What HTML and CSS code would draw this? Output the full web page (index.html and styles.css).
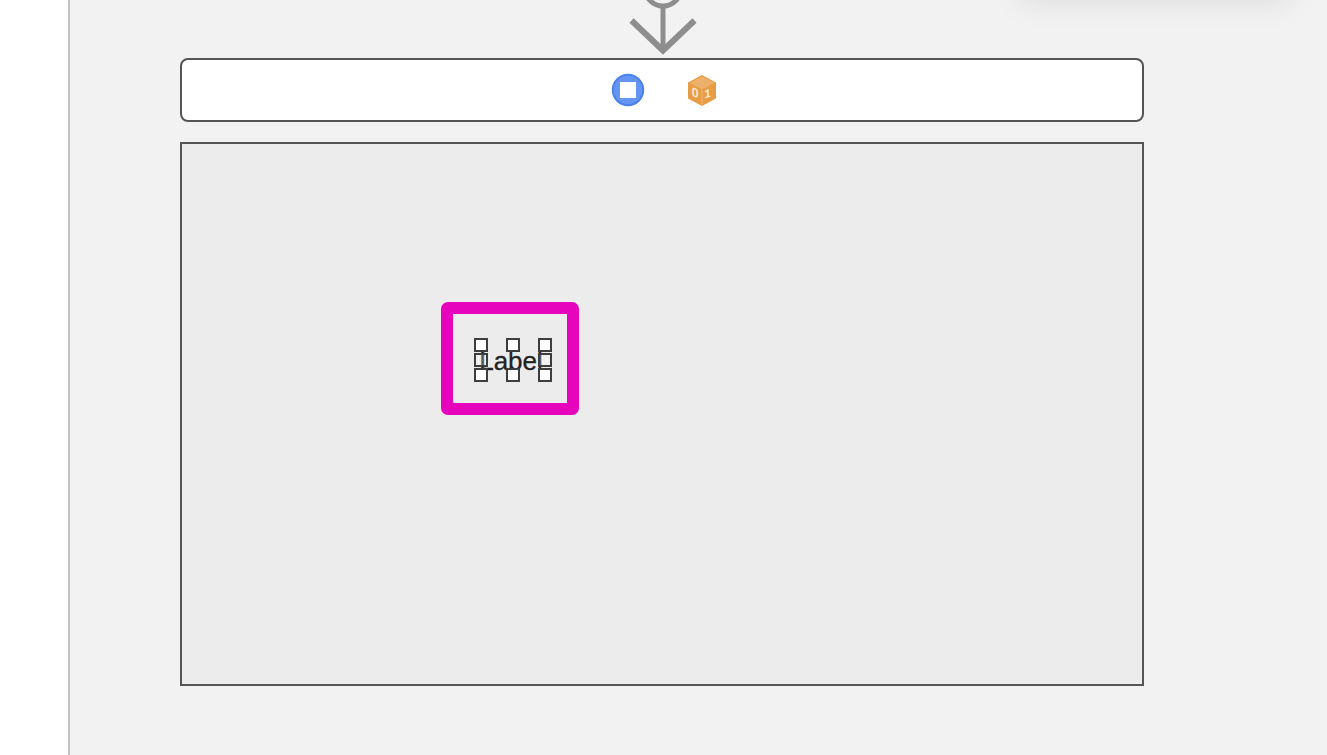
FILE: index.html
```html
<!DOCTYPE html>
<html lang="en">
<head>
<meta charset="utf-8">
<title>Storyboard scene</title>
<link rel="stylesheet" href="styles.css">
</head>
<body>
<div class="app">
  <aside class="sidebar"></aside>
  <main class="canvas">
    <div class="popup-shadow"></div>
    <svg class="segue" width="964" height="58" viewBox="0 0 964 58" aria-hidden="true">
      <circle cx="483" cy="-12" r="18" fill="none" stroke="#8e8e8e" stroke-width="5"/>
      <path d="M483 6V50" fill="none" stroke="#8e8e8e" stroke-width="5"/>
      <path d="M451.500 20.500L483 50.500L514.500 20.500" fill="none" stroke="#8e8e8e" stroke-width="6"/>
    </svg>
    <section class="scene-dock">
      <svg class="dock-icon" width="34" height="34" viewBox="0 0 34 34" aria-hidden="true">
        <circle cx="17" cy="17" r="15.200" fill="#6495f3" stroke="#4a81ec" stroke-width="2"/>
        <rect x="9" y="9" width="16" height="16" fill="#fff"/>
      </svg>
      <svg class="dock-icon" width="32" height="34" viewBox="0 0 32 34" aria-hidden="true">
        <path d="M16 2L30 9.500V25.500L16 33L2 25.500V9.500Z" fill="#e89c45"/>
        <path d="M16 3.500L28.500 10L16 16.500L3.500 10Z" fill="#edb06b"/>
        <path d="M16 17V32" stroke="#f0b87a" stroke-width="1"/>
        <text class="cube-digit cube-digit-left" transform="translate(9 24) skewY(20)">0</text>
        <text class="cube-digit cube-digit-right" transform="translate(21.500 24.500) skewY(-15)">1</text>
      </svg>
    </section>
    <section class="scene-view">
      <div class="label-target">
        <span class="label-text">Label</span>
        <div class="handles">
          <i class="handle"></i><i class="handle"></i><i class="handle"></i>
          <i class="handle handle-mid"></i><i class="handle-gap"></i><i class="handle handle-mid"></i>
          <i class="handle"></i><i class="handle"></i><i class="handle"></i>
        </div>
      </div>
    </section>
  </main>
</div>
</body>
</html>
```

FILE: styles.css
```css
html, body {
  margin: 0;
  height: 100%;
  overflow: hidden;
  background: #fff;
}

.app {
  display: flex;
  width: 1327px;
  height: 755px;
  overflow: hidden;
}

.sidebar {
  width: 68px;
  flex: none;
  background: #fff;
}

.canvas {
  position: relative;
  flex: 1;
  box-sizing: border-box;
  padding-left: 110px;
  background: #f2f2f2;
  border-left: 2px solid #c2c2c2;
  overflow: hidden;
}

.popup-shadow {
  position: absolute;
  left: 950px;
  top: -40px;
  width: 270px;
  height: 40px;
  box-shadow: 0 0 32px rgba(0, 0, 0, 0.1);
}

.segue {
  display: block;
  overflow: hidden;
}

.scene-dock {
  box-sizing: border-box;
  width: 964px;
  height: 64px;
  display: flex;
  align-items: center;
  justify-content: center;
  gap: 41px;
  padding-left: 5px;
  background: #fff;
  border: 2px solid #555;
  border-radius: 8px;
}

.dock-icon {
  display: block;
}

.cube-digit {
  font-family: "Liberation Sans", Arial, sans-serif;
  font-weight: 700;
  fill: #fbe6cc;
  text-anchor: middle;
}

.cube-digit-left {
  font-size: 13px;
}

.cube-digit-right {
  font-size: 12px;
}

.scene-view {
  box-sizing: border-box;
  width: 964px;
  height: 544px;
  margin-top: 20px;
  padding: 158px 0 0 259px;
  background: #ececec;
  border: 2px solid #555;
}

.label-target {
  position: relative;
  box-sizing: border-box;
  width: 138px;
  height: 113px;
  display: flex;
  align-items: center;
  justify-content: center;
  border: 12px solid #e605bd;
  border-radius: 7px;
}

.label-text {
  margin: 5px 0 0 2px;
  font-family: "Liberation Sans", Arial, sans-serif;
  font-size: 26px;
  line-height: 30px;
  color: #222;
  -webkit-text-stroke: 0.3px #222;
}

.handles {
  position: absolute;
  left: 21px;
  top: 24px;
  display: grid;
  grid-template-columns: repeat(3, 14px);
  grid-template-rows: repeat(3, 14px);
  column-gap: 18px;
  row-gap: 1px;
}

.handle {
  box-sizing: border-box;
  display: block;
  background: #fff;
  border: 2px solid #3d3d3d;
}

.handle-mid {
  background: rgba(255, 255, 255, 0.25);
}
```
